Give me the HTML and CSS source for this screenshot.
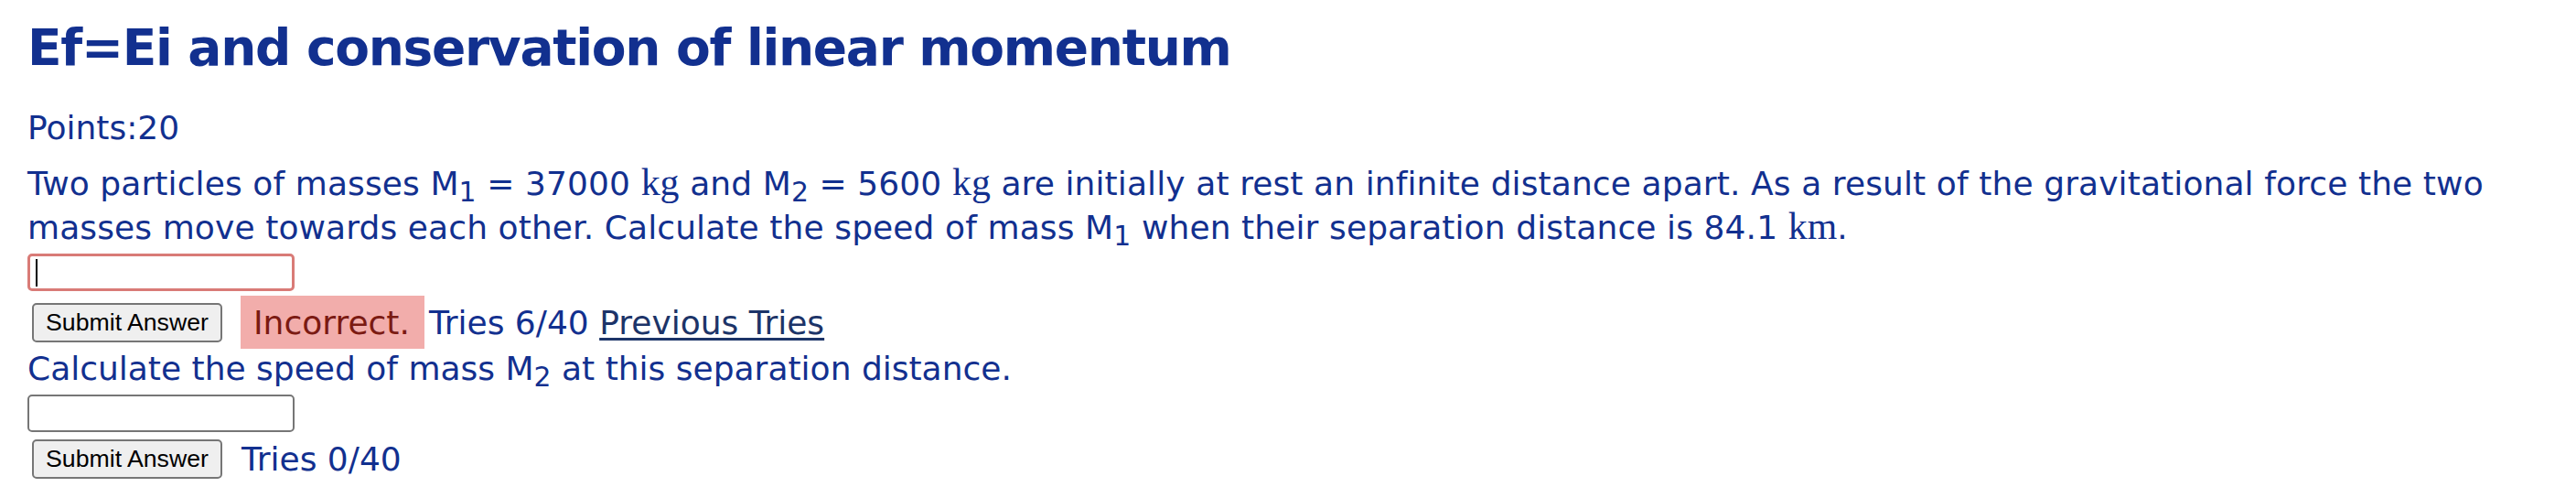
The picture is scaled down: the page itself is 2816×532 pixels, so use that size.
FILE: index.html
```html
<!DOCTYPE html>
<html lang="en">
<head>
<meta charset="utf-8">
<title>Ef=Ei and conservation of linear momentum</title>
<link rel="stylesheet" href="styles.css">
</head>
<body>
<div class="page">
  <h2 class="title">Ef=Ei and conservation of linear momentum</h2>
  <div class="points">Points:20</div>
  <p class="problem">Two particles of masses M<sub>1</sub> = 37000 <span class="unit">kg</span> and M<sub>2</sub> = 5600 <span class="unit">kg</span> are initially at rest an infinite distance apart. As a result of the gravitational force the two masses move towards each other. Calculate the speed of mass M<sub>1</sub> when their separation distance is 84.1 <span class="unit">km</span>.</p>
  <div class="field field-error"><span class="caret"></span></div>
  <div class="answer-row">
    <button class="submit" type="button">Submit Answer</button>
    <span class="feedback">Incorrect.</span>
    <span class="tries">Tries 6/40 <a class="prev" href="#">Previous Tries</a></span>
  </div>
  <p class="question">Calculate the speed of mass M<sub>2</sub> at this separation distance.</p>
  <div class="field field-plain"></div>
  <div class="answer-row answer-row-2">
    <button class="submit" type="button">Submit Answer</button>
    <span class="tries tries-only">Tries 0/40</span>
  </div>
</div>
</body>
</html>
```
FILE: styles.css
```css
html, body {
  margin: 0;
  padding: 0;
  background: #ffffff;
}

.page {
  padding: 19px 0 0 30px;
  font-family: "DejaVu Sans", Verdana, sans-serif;
  color: #12308f;
  font-size: 36px;
}

.title {
  margin: 0;
  font-size: 55px;
  line-height: 66px;
  letter-spacing: -1.3px;
  font-weight: bold;
  color: #12308f;
}

.points {
  margin-top: 33px;
  line-height: 44px;
}

.problem {
  margin: 15px 0 0 0;
  line-height: 48px;
  max-width: 2770px;
  letter-spacing: 0.1px;
}

sub {
  font-size: 0.83em;
  line-height: 0;
  vertical-align: -0.22em;
}

.unit {
  font-family: "Liberation Serif", "Times New Roman", serif;
  font-size: 1.16em;
  line-height: 0;
}

.field {
  box-sizing: border-box;
  width: 292px;
  height: 41px;
  border-radius: 5px;
  background: #ffffff;
  display: flex;
  align-items: center;
}

.field-error {
  margin-top: 4px;
  border: 3px solid #d97b77;
}

.field-plain {
  margin-top: 6px;
  border: 2px solid #767676;
}

.caret {
  display: block;
  width: 2px;
  height: 30px;
  margin-left: 6px;
  background: #000000;
}

.answer-row {
  display: flex;
  align-items: center;
  margin-top: 5px;
  height: 58px;
}

.answer-row-2 {
  margin-top: 8px;
  height: 43px;
}

.submit {
  box-sizing: border-box;
  margin: 0 0 0 5px;
  width: 208px;
  height: 43px;
  padding: 0;
  border: 2px solid #767676;
  border-radius: 5px;
  background: #efefef;
  color: #000000;
  font-family: "Liberation Sans", Arial, sans-serif;
  font-size: 26.67px;
}

.feedback {
  box-sizing: border-box;
  margin-left: 20px;
  height: 58px;
  width: 201px;
  padding-left: 14px;
  display: flex;
  align-items: center;
  background: #f2adab;
  color: #7b1a12;
  white-space: nowrap;
}

.tries {
  margin-left: 5px;
  white-space: nowrap;
}

.tries-only {
  margin-left: 21px;
}

.prev {
  color: #1c3468;
  text-decoration: underline;
  text-underline-offset: 4px;
}

.question {
  margin: 0;
  line-height: 44px;
}
```
